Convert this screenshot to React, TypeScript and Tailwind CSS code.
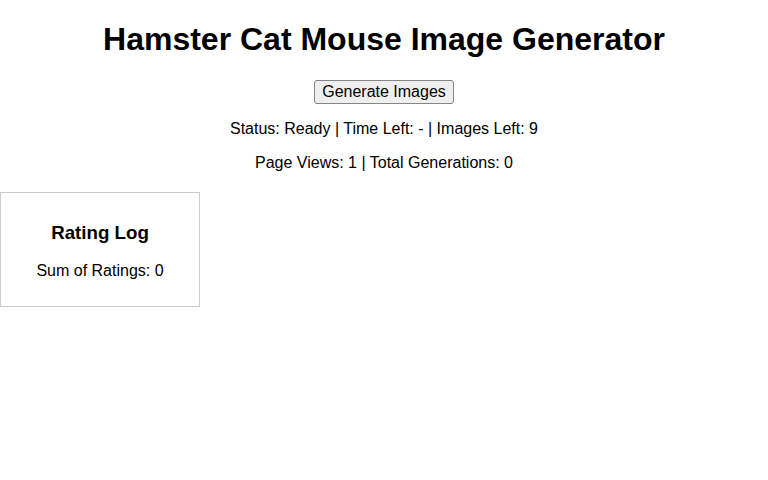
export default function App() {
  return (
    <div className="min-h-[480px] bg-white text-black font-['Liberation_Sans',Arial,sans-serif]">
      {/* Header */}
      <h1 className="pt-[21px] text-center text-[32px] font-bold leading-[37px]">
        Hamster Cat Mouse Image Generator
      </h1>

      {/* Controls */}
      <div className="mt-[22px] flex justify-center">
        <button className="h-[24px] px-[7px] text-[16px] leading-[18px] bg-[#efefef] border border-[#858585] rounded-[3px]">
          Generate Images
        </button>
      </div>

      <p className="mt-[16px] text-center text-[16px] leading-[18px]">
        Status: Ready | Time Left: - | Images Left: 9
      </p>
      <p className="mt-[16px] text-center text-[16px] leading-[18px]">
        Page Views: 1 | Total Generations: 0
      </p>

      {/* Rating log */}
      <div className="mt-[20px] w-[200px] h-[115px] border border-[#cccccc] px-[10px] pt-[29px] text-center">
        <h3 className="text-[18.72px] font-bold leading-[22px]">Rating Log</h3>
        <p className="mt-[18px] text-[16px] leading-[18px]">Sum of Ratings: 0</p>
      </div>
    </div>
  );
}
